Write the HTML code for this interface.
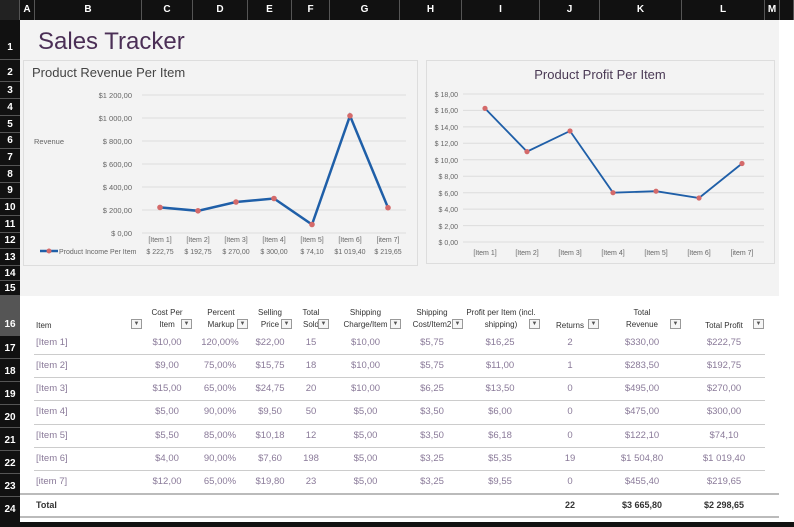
<!DOCTYPE html><html><head><meta charset="utf-8"><style>
body{margin:0;width:794px;height:527px;overflow:hidden;background:#fff;font-family:"Liberation Sans",sans-serif;position:relative}
.a{position:absolute}
.ch{position:absolute;top:0;height:20px;background:#111;color:#fff;font-size:10px;font-weight:bold;line-height:20px;text-align:center;border-right:1px solid #555;box-sizing:border-box}
.rh{position:absolute;left:0;width:20px;background:#111;color:#fff;font-size:10px;font-weight:bold;text-align:center;border-bottom:1px solid #555;box-sizing:border-box}
.t{position:absolute;font-size:9.5px;color:#8a7a99;text-align:center}
.h{position:absolute;font-size:8px;color:#333;text-align:center;line-height:12px}
.dd{position:absolute;width:11px;height:10px;border:1px solid #999;background:#f6f6f6;box-sizing:border-box;font-size:6px;line-height:8px;text-align:center;color:#555}
.ln{position:absolute;left:34px;width:731px;height:1px;background:#ccc}
</style></head><body>
<div class="a" style="left:20px;top:20px;width:759px;height:276px;background:#f3f3f3"></div>
<div class="ch" style="left:0;width:20px;background:#222"></div>
<div class="ch" style="left:20px;width:15px">A</div><div class="ch" style="left:35px;width:107px">B</div><div class="ch" style="left:142px;width:51px">C</div><div class="ch" style="left:193px;width:55px">D</div><div class="ch" style="left:248px;width:44px">E</div><div class="ch" style="left:292px;width:38px">F</div><div class="ch" style="left:330px;width:70px">G</div><div class="ch" style="left:400px;width:62px">H</div><div class="ch" style="left:462px;width:78px">I</div><div class="ch" style="left:540px;width:60px">J</div><div class="ch" style="left:600px;width:82px">K</div><div class="ch" style="left:682px;width:83px">L</div><div class="ch" style="left:765px;width:15px">M</div><div class="ch" style="left:780px;width:14px"></div>
<div class="rh" style="top:20px;height:40px;line-height:56px">1</div>
<div class="rh" style="top:60px;height:22px;line-height:26px">2</div>
<div class="rh" style="top:82px;height:17px;line-height:17px">3</div><div class="rh" style="top:99px;height:17px;line-height:17px">4</div><div class="rh" style="top:116px;height:17px;line-height:17px">5</div><div class="rh" style="top:133px;height:16px;line-height:16px">6</div><div class="rh" style="top:149px;height:17px;line-height:17px">7</div><div class="rh" style="top:166px;height:17px;line-height:17px">8</div><div class="rh" style="top:183px;height:16px;line-height:16px">9</div><div class="rh" style="top:199px;height:17px;line-height:17px">10</div><div class="rh" style="top:216px;height:17px;line-height:17px">11</div><div class="rh" style="top:233px;height:16px;line-height:16px">12</div><div class="rh" style="top:249px;height:17px;line-height:17px">13</div><div class="rh" style="top:266px;height:15px;line-height:15px">14</div><div class="rh" style="top:281px;height:15px;line-height:15px">15</div>
<div class="rh" style="top:296px;height:40px;line-height:58px;background:#555">16</div>
<div class="rh" style="top:336px;height:23px;line-height:26px">17</div><div class="rh" style="top:359px;height:23px;line-height:26px">18</div><div class="rh" style="top:382px;height:23px;line-height:26px">19</div><div class="rh" style="top:405px;height:23px;line-height:26px">20</div><div class="rh" style="top:428px;height:23px;line-height:26px">21</div><div class="rh" style="top:451px;height:23px;line-height:26px">22</div><div class="rh" style="top:474px;height:23px;line-height:26px">23</div><div class="rh" style="top:497px;height:30px;line-height:26px">24</div>
<div class="a" style="left:38px;top:28px;font-size:24px;color:#4b2f56">Sales Tracker</div>
<svg class="a" style="left:0;top:0" width="794" height="527" font-family="Liberation Sans, sans-serif">
<rect x="23.5" y="60.5" width="394" height="205" fill="#f3f3f3" stroke="#ddd"/>
<text x="32" y="77" font-size="13" fill="#444">Product Revenue Per Item</text>
<g stroke="#dcdcdc"><line x1="142" x2="406" y1="95" y2="95"/><line x1="142" x2="406" y1="118" y2="118"/><line x1="142" x2="406" y1="141" y2="141"/><line x1="142" x2="406" y1="164" y2="164"/><line x1="142" x2="406" y1="187" y2="187"/><line x1="142" x2="406" y1="210" y2="210"/><line x1="142" x2="406" y1="233" y2="233"/></g>
<g font-size="7.5" fill="#666" text-anchor="end"><text x="132" y="98">$1 200,00</text><text x="132" y="121">$1 000,00</text><text x="132" y="144">$ 800,00</text><text x="132" y="167">$ 600,00</text><text x="132" y="190">$ 400,00</text><text x="132" y="213">$ 200,00</text><text x="132" y="236">$ 0,00</text></g>
<text x="34" y="144" font-size="7.5" fill="#666">Revenue</text>
<polyline points="160,207.4 198,210.8 236,202 274,198.5 312,224.5 350,115.8 388,207.7" fill="none" stroke="#1f5fa8" stroke-width="2.5"/>
<g fill="#d46a6a"><circle cx="160" cy="207.4" r="2.8"/><circle cx="198" cy="210.8" r="2.8"/><circle cx="236" cy="202" r="2.8"/><circle cx="274" cy="198.5" r="2.8"/><circle cx="312" cy="224.5" r="2.8"/><circle cx="350" cy="115.8" r="2.8"/><circle cx="388" cy="207.7" r="2.8"/></g>
<g font-size="7" fill="#666" text-anchor="middle"><text x="160" y="242">[Item 1]</text><text x="198" y="242">[Item 2]</text><text x="236" y="242">[Item 3]</text><text x="274" y="242">[Item 4]</text><text x="312" y="242">[Item 5]</text><text x="350" y="242">[Item 6]</text><text x="388" y="242">[item 7]</text>
<text x="160" y="254">$ 222,75</text><text x="198" y="254">$ 192,75</text><text x="236" y="254">$ 270,00</text><text x="274" y="254">$ 300,00</text><text x="312" y="254">$ 74,10</text><text x="350" y="254">$1 019,40</text><text x="388" y="254">$ 219,65</text></g>
<line x1="40" x2="58" y1="251" y2="251" stroke="#1f5fa8" stroke-width="2.5"/><circle cx="49" cy="251" r="2.5" fill="#d46a6a"/>
<text x="59" y="254" font-size="7" fill="#666">Product Income Per Item</text>
<rect x="426.5" y="60.5" width="348" height="203" fill="#f3f3f3" stroke="#ddd"/>
<text x="600" y="79" font-size="13" fill="#4b3a55" text-anchor="middle">Product Profit Per Item</text>
<g stroke="#dcdcdc"><line x1="463" x2="764" y1="94" y2="94"/><line x1="463" x2="764" y1="110.4" y2="110.4"/><line x1="463" x2="764" y1="126.9" y2="126.9"/><line x1="463" x2="764" y1="143.3" y2="143.3"/><line x1="463" x2="764" y1="159.8" y2="159.8"/><line x1="463" x2="764" y1="176.2" y2="176.2"/><line x1="463" x2="764" y1="192.7" y2="192.7"/><line x1="463" x2="764" y1="209.1" y2="209.1"/><line x1="463" x2="764" y1="225.6" y2="225.6"/><line x1="463" x2="764" y1="242" y2="242"/></g>
<g font-size="7" fill="#666" text-anchor="end"><text x="458" y="97">$ 18,00</text><text x="458" y="113">$ 16,00</text><text x="458" y="130">$ 14,00</text><text x="458" y="146">$ 12,00</text><text x="458" y="163">$ 10,00</text><text x="458" y="179">$ 8,00</text><text x="458" y="196">$ 6,00</text><text x="458" y="212">$ 4,00</text><text x="458" y="229">$ 2,00</text><text x="458" y="245">$ 0,00</text></g>
<polyline points="485,108.4 527,151.6 570,131 613,192.7 656,191.2 699,198 742,163.5" fill="none" stroke="#1f5fa8" stroke-width="1.8"/>
<g fill="#d46a6a"><circle cx="485" cy="108.4" r="2.6"/><circle cx="527" cy="151.6" r="2.6"/><circle cx="570" cy="131" r="2.6"/><circle cx="613" cy="192.7" r="2.6"/><circle cx="656" cy="191.2" r="2.6"/><circle cx="699" cy="198" r="2.6"/><circle cx="742" cy="163.5" r="2.6"/></g>
<g font-size="7" fill="#666" text-anchor="middle"><text x="485" y="255">[Item 1]</text><text x="527" y="255">[Item 2]</text><text x="570" y="255">[Item 3]</text><text x="613" y="255">[Item 4]</text><text x="656" y="255">[Item 5]</text><text x="699" y="255">[Item 6]</text><text x="742" y="255">[item 7]</text></g>
</svg>
<div class="h" style="left:36px;top:320px;text-align:left">Item</div><div class="dd" style="left:131px;top:319px">▼</div>
<div class="h" style="left:145px;top:307px;width:44px">Cost Per<br>Item</div><div class="dd" style="left:181px;top:319px">▼</div>
<div class="h" style="left:198px;top:307px;width:46px">Percent<br>Markup</div><div class="dd" style="left:237px;top:319px">▼</div>
<div class="h" style="left:252px;top:307px;width:36px">Selling<br>Price</div><div class="dd" style="left:281px;top:319px">▼</div>
<div class="h" style="left:298px;top:307px;width:26px">Total<br>Sold</div><div class="dd" style="left:318px;top:319px">▼</div>
<div class="h" style="left:338px;top:307px;width:55px">Shipping<br>Charge/Item</div><div class="dd" style="left:390px;top:319px">▼</div>
<div class="h" style="left:410px;top:307px;width:44px">Shipping<br>Cost/Item2</div><div class="dd" style="left:452px;top:319px">▼</div>
<div class="h" style="left:462px;top:307px;width:78px">Profit per Item (incl.<br>shipping)</div><div class="dd" style="left:529px;top:319px">▼</div>
<div class="h" style="left:550px;top:320px;width:40px">Returns</div><div class="dd" style="left:588px;top:319px">▼</div>
<div class="h" style="left:617px;top:307px;width:50px">Total<br>Revenue</div><div class="dd" style="left:670px;top:319px">▼</div>
<div class="h" style="left:700px;top:320px;width:48px">Total Profit</div><div class="dd" style="left:753px;top:319px">▼</div>
<div class="ln" style="top:354px"></div><div class="ln" style="top:377px"></div><div class="ln" style="top:400px"></div><div class="ln" style="top:424px"></div><div class="ln" style="top:447px"></div><div class="ln" style="top:470px"></div><div class="ln" style="top:493px;left:20px;width:759px;height:2px;background:#bbb"></div><div class="ln" style="top:516px;left:20px;width:759px;height:2px;background:#bbb"></div>
<div class="a" style="left:0;top:522px;width:794px;height:5px;background:#111"></div>
<div id="rows"></div>
<div class="a" style="left:36px;top:500px;font-size:9px;font-weight:bold;color:#333">Total</div>
<div class="a" style="left:550px;top:500px;width:40px;text-align:center;font-size:9px;font-weight:bold;color:#333">22</div>
<div class="a" style="left:612px;top:500px;width:60px;text-align:center;font-size:9px;font-weight:bold;color:#333">$3 665,80</div>
<div class="a" style="left:694px;top:500px;width:60px;text-align:center;font-size:9px;font-weight:bold;color:#333">$2 298,65</div>
<div class="t" style="left:36px;top:337px;text-align:left">[Item 1]</div><div class="t" style="left:140px;top:337px;width:54px">$10,00</div><div class="t" style="left:195px;top:337px;width:50px">120,00%</div><div class="t" style="left:245px;top:337px;width:50px">$22,00</div><div class="t" style="left:296px;top:337px;width:30px">15</div><div class="t" style="left:338px;top:337px;width:55px">$10,00</div><div class="t" style="left:410px;top:337px;width:44px">$5,75</div><div class="t" style="left:470px;top:337px;width:60px">$16,25</div><div class="t" style="left:550px;top:337px;width:40px">2</div><div class="t" style="left:612px;top:337px;width:60px">$330,00</div><div class="t" style="left:694px;top:337px;width:60px">$222,75</div>
<div class="t" style="left:36px;top:360px;text-align:left">[Item 2]</div><div class="t" style="left:140px;top:360px;width:54px">$9,00</div><div class="t" style="left:195px;top:360px;width:50px">75,00%</div><div class="t" style="left:245px;top:360px;width:50px">$15,75</div><div class="t" style="left:296px;top:360px;width:30px">18</div><div class="t" style="left:338px;top:360px;width:55px">$10,00</div><div class="t" style="left:410px;top:360px;width:44px">$5,75</div><div class="t" style="left:470px;top:360px;width:60px">$11,00</div><div class="t" style="left:550px;top:360px;width:40px">1</div><div class="t" style="left:612px;top:360px;width:60px">$283,50</div><div class="t" style="left:694px;top:360px;width:60px">$192,75</div>
<div class="t" style="left:36px;top:383px;text-align:left">[Item 3]</div><div class="t" style="left:140px;top:383px;width:54px">$15,00</div><div class="t" style="left:195px;top:383px;width:50px">65,00%</div><div class="t" style="left:245px;top:383px;width:50px">$24,75</div><div class="t" style="left:296px;top:383px;width:30px">20</div><div class="t" style="left:338px;top:383px;width:55px">$10,00</div><div class="t" style="left:410px;top:383px;width:44px">$6,25</div><div class="t" style="left:470px;top:383px;width:60px">$13,50</div><div class="t" style="left:550px;top:383px;width:40px">0</div><div class="t" style="left:612px;top:383px;width:60px">$495,00</div><div class="t" style="left:694px;top:383px;width:60px">$270,00</div>
<div class="t" style="left:36px;top:406px;text-align:left">[Item 4]</div><div class="t" style="left:140px;top:406px;width:54px">$5,00</div><div class="t" style="left:195px;top:406px;width:50px">90,00%</div><div class="t" style="left:245px;top:406px;width:50px">$9,50</div><div class="t" style="left:296px;top:406px;width:30px">50</div><div class="t" style="left:338px;top:406px;width:55px">$5,00</div><div class="t" style="left:410px;top:406px;width:44px">$3,50</div><div class="t" style="left:470px;top:406px;width:60px">$6,00</div><div class="t" style="left:550px;top:406px;width:40px">0</div><div class="t" style="left:612px;top:406px;width:60px">$475,00</div><div class="t" style="left:694px;top:406px;width:60px">$300,00</div>
<div class="t" style="left:36px;top:430px;text-align:left">[Item 5]</div><div class="t" style="left:140px;top:430px;width:54px">$5,50</div><div class="t" style="left:195px;top:430px;width:50px">85,00%</div><div class="t" style="left:245px;top:430px;width:50px">$10,18</div><div class="t" style="left:296px;top:430px;width:30px">12</div><div class="t" style="left:338px;top:430px;width:55px">$5,00</div><div class="t" style="left:410px;top:430px;width:44px">$3,50</div><div class="t" style="left:470px;top:430px;width:60px">$6,18</div><div class="t" style="left:550px;top:430px;width:40px">0</div><div class="t" style="left:612px;top:430px;width:60px">$122,10</div><div class="t" style="left:694px;top:430px;width:60px">$74,10</div>
<div class="t" style="left:36px;top:453px;text-align:left">[Item 6]</div><div class="t" style="left:140px;top:453px;width:54px">$4,00</div><div class="t" style="left:195px;top:453px;width:50px">90,00%</div><div class="t" style="left:245px;top:453px;width:50px">$7,60</div><div class="t" style="left:296px;top:453px;width:30px">198</div><div class="t" style="left:338px;top:453px;width:55px">$5,00</div><div class="t" style="left:410px;top:453px;width:44px">$3,25</div><div class="t" style="left:470px;top:453px;width:60px">$5,35</div><div class="t" style="left:550px;top:453px;width:40px">19</div><div class="t" style="left:612px;top:453px;width:60px">$1 504,80</div><div class="t" style="left:694px;top:453px;width:60px">$1 019,40</div>
<div class="t" style="left:36px;top:476px;text-align:left">[item 7]</div><div class="t" style="left:140px;top:476px;width:54px">$12,00</div><div class="t" style="left:195px;top:476px;width:50px">65,00%</div><div class="t" style="left:245px;top:476px;width:50px">$19,80</div><div class="t" style="left:296px;top:476px;width:30px">23</div><div class="t" style="left:338px;top:476px;width:55px">$5,00</div><div class="t" style="left:410px;top:476px;width:44px">$3,25</div><div class="t" style="left:470px;top:476px;width:60px">$9,55</div><div class="t" style="left:550px;top:476px;width:40px">0</div><div class="t" style="left:612px;top:476px;width:60px">$455,40</div><div class="t" style="left:694px;top:476px;width:60px">$219,65</div>
</body></html>
